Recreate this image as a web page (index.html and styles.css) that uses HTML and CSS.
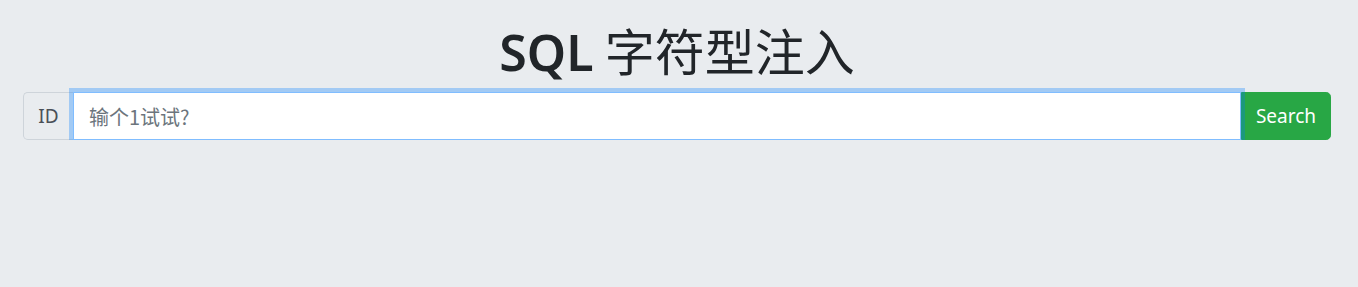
FILE: index.html
```html
<!DOCTYPE html>
<html lang="zh-CN">
<head>
<meta charset="utf-8">
<title>SQL 字符型注入</title>
<link rel="stylesheet" href="styles.css">
</head>
<body>
<div class="page">
  <h1 class="title"><span class="latin">SQL</span> 字符型注入</h1>
  <form class="input-group">
    <span class="addon">ID</span>
    <div class="field-wrap">
      <input class="field" type="text" placeholder="输个1试试?">
    </div>
    <button class="btn" type="button">Search</button>
  </form>
</div>
</body>
</html>
```
FILE: styles.css
```css
html, body {
  margin: 0;
  padding: 0;
  background: #e9ecef;
}
body {
  font-family: "Noto Sans", "Noto Sans CJK SC", sans-serif;
  color: #212529;
}
.page {
  padding: 20px 27px 0 23px;
}
.title {
  height: 58px;
  margin: 0 0 14px;
  text-align: center;
  font-family: "Noto Sans CJK SC", sans-serif;
  font-size: 50px;
  font-weight: 400;
  line-height: 58px;
  color: #212529;
}
.latin {
  font-family: "Noto Sans", sans-serif;
  font-weight: 600;
}
.input-group {
  display: flex;
  align-items: stretch;
  height: 48px;
  font-size: 19px;
}
.addon {
  display: flex;
  align-items: center;
  box-sizing: border-box;
  width: 50px;
  justify-content: center;
  background: #e9ecef;
  border: 1px solid #ced4da;
  border-right: 0;
  border-radius: 4.8px 0 0 4.8px;
  color: #495057;
  font-family: "Noto Sans", sans-serif;
}
.field-wrap {
  flex: 1;
  min-width: 0;
  display: flex;
  position: relative;
  z-index: 3;
  box-sizing: border-box;
  border: 1px solid #80bdff;
  box-shadow: 0 0 0 4px rgba(0, 123, 255, 0.3);
  background: #fff;
}
.field {
  flex: 1;
  min-width: 0;
  margin: 0;
  padding: 0 15px;
  border: 0;
  outline: none;
  background: transparent;
  color: #495057;
  font-family: "Noto Sans CJK SC", sans-serif;
  font-size: 20px;
}
.field::placeholder {
  color: #6c757d;
  opacity: 1;
}
.btn {
  box-sizing: border-box;
  width: 90px;
  height: 48px;
  margin: 0;
  border: 1px solid #28a745;
  border-radius: 0 4.8px 4.8px 0;
  background: #28a745;
  color: #fff;
  font-family: "Noto Sans", sans-serif;
  font-size: 19px;
  padding: 0;
}
```
